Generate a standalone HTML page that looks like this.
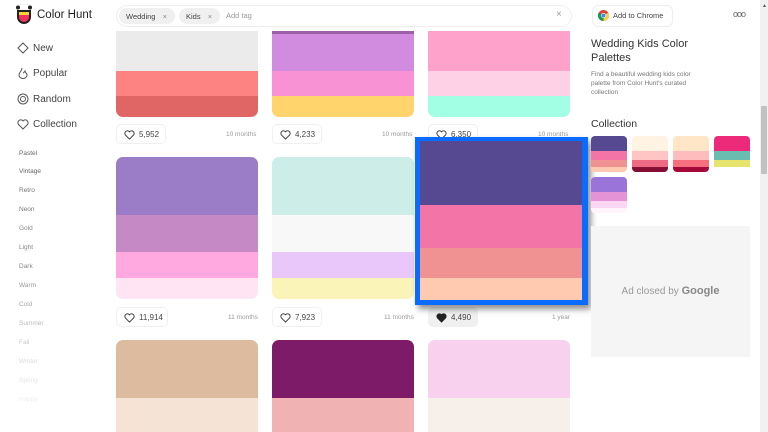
<!DOCTYPE html>
<html style="overflow:hidden;width:768px;height:432px"><head><style>
*{margin:0;padding:0;box-sizing:border-box}
body{width:768px;height:432px;overflow:hidden;background:#fff;font-family:"Liberation Sans",sans-serif;position:relative;color:#333}
.a{position:absolute}
.card{position:absolute;width:142px;border-radius:7px;overflow:hidden}
.card div{width:100%}
.like{position:absolute;height:20px;border:1px solid #f0f0f0;border-radius:5px;font-size:8px;color:#444;padding:5px 6px 0 22px}
.like svg{position:absolute;left:7px;top:5px}
.time{position:absolute;font-size:6.5px;color:#999}
.nav{position:absolute;left:33px;font-size:10px;color:#444}
.sub{position:absolute;left:19px;font-size:6.5px}
.th{position:absolute;width:36px;height:36px;border-radius:4px;overflow:hidden}
.th div{width:100%}
</style></head><body>
<div class="card" style="left:116px;top:22px;height:95px"><div style="height:49px;background:#ebebeb"></div><div style="height:25px;background:#fd8282"></div><div style="height:21px;background:#e06565"></div></div>
<div class="card" style="left:272px;top:22px;height:95px"><div style="height:12px;background:#9c5fa8"></div><div style="height:37px;background:#d28cdf"></div><div style="height:25px;background:#f892d5"></div><div style="height:21px;background:#ffd46c"></div></div>
<div class="card" style="left:428px;top:22px;height:95px"><div style="height:49px;background:#fea1cb"></div><div style="height:25px;background:#ffd1e6"></div><div style="height:21px;background:#a3ffe3"></div></div>
<div class="a" style="left:0;top:0;width:760px;height:31px;background:#fff"></div>
<svg class="a" style="left:15px;top:5px" width="18" height="19" viewBox="0 0 18 19"><circle cx="3" cy="2.5" r="2" fill="#222"/><circle cx="15" cy="2.5" r="2" fill="#222"/><path d="M2 5h14v7a7 7 0 0 1-14 0z" fill="#222"/><path d="M4 7h10v3H4z" fill="#fbd535"/><path d="M4 10h10v2a5 5 0 0 1-10 0z" fill="#f0325d"/></svg>
<div class="a" style="left:37px;top:9px;font-size:11.5px;color:#222">Color Hunt</div>
<div class="a" style="left:116px;top:5px;width:456px;height:22px;border:1px solid #eee;border-radius:11px"></div>
<div class="a" style="left:119px;top:8px;width:56px;height:16px;background:#f0f0f0;border-radius:8px;font-size:7.5px;color:#444;padding:4px 7px">Wedding <span style="color:#888;margin-left:5px">×</span></div>
<div class="a" style="left:179px;top:8px;width:41px;height:16px;background:#f0f0f0;border-radius:8px;font-size:7.5px;color:#444;padding:4px 7px">Kids <span style="color:#888;margin-left:5px">×</span></div>
<div class="a" style="left:226px;top:11px;font-size:7.5px;color:#999">Add tag</div>
<div class="a" style="left:556px;top:9px;font-size:10px;color:#999">×</div>
<div class="a" style="left:592px;top:5px;width:81px;height:22px;border:1px solid #eee;border-radius:6px"></div>
<svg class="a" style="left:598px;top:10px" width="11" height="11" viewBox="0 0 20 20"><circle cx="10" cy="10" r="10" fill="#db4437"/><path d="M10 10L1.3 15A10 10 0 0 0 10 20z" fill="#0f9d58"/><path d="M10 10L18.7 5A10 10 0 0 1 10 20z" fill="#ffcd40"/><path d="M10 10L1.3 15A10 10 0 0 1 1.3 5z" fill="#0f9d58"/><circle cx="10" cy="10" r="4.5" fill="#fff"/><circle cx="10" cy="10" r="3.5" fill="#4285f4"/></svg>
<div class="a" style="left:613px;top:11px;font-size:7.5px;color:#444">Add to Chrome</div>
<div class="a" style="left:733px;top:9px;font-size:9px;color:#666;letter-spacing:-1px">ooo</div>
<svg class="a" style="left:17px;top:42px" width="12" height="12" viewBox="0 0 12 12"><path d="M6 1L11 6 6 11 1 6z" fill="none" stroke="#555" stroke-width="1"/></svg>
<div class="nav" style="top:43px">New</div>
<svg class="a" style="left:17px;top:67px" width="12" height="12" viewBox="0 0 12 12"><path d="M5 1c0 3-3 4-3 7a4 3.5 0 0 0 8 0c0-2-2-2-2-4-1 1-1 2-2 2" fill="none" stroke="#555"/></svg>
<div class="nav" style="top:68px">Popular</div>
<svg class="a" style="left:17px;top:93px" width="12" height="12" viewBox="0 0 12 12"><circle cx="6" cy="6" r="5" fill="none" stroke="#555"/><circle cx="6" cy="6" r="2.5" fill="none" stroke="#555"/></svg>
<div class="nav" style="top:94px">Random</div>
<svg class="a" style="left:17px;top:119px" width="12" height="11" viewBox="0 0 12 11"><path d="M6 10L1.5 5.5a2.7 2.7 0 0 1 4.5-3.5 2.7 2.7 0 0 1 4.5 3.5z" fill="none" stroke="#555"/></svg>
<div class="nav" style="top:119px">Collection</div>
<div class="sub" style="top:150px;color:#666">Pastel</div>
<div class="sub" style="top:168px;color:#666">Vintage</div>
<div class="sub" style="top:187px;color:#777">Retro</div>
<div class="sub" style="top:206px;color:#777">Neon</div>
<div class="sub" style="top:225px;color:#888">Gold</div>
<div class="sub" style="top:244px;color:#888">Light</div>
<div class="sub" style="top:263px;color:#888">Dark</div>
<div class="sub" style="top:282px;color:#999">Warm</div>
<div class="sub" style="top:301px;color:#aaa">Cold</div>
<div class="sub" style="top:320px;color:#bbb">Summer</div>
<div class="sub" style="top:339px;color:#ccc">Fall</div>
<div class="sub" style="top:358px;color:#ddd">Winter</div>
<div class="sub" style="top:377px;color:#e5e5e5">Spring</div>
<div class="sub" style="top:396px;color:#eee">Happy</div>
<div class="like" style="left:116px;top:124px;width:50px"><svg width="11" height="10" viewBox="0 0 12 11"><path d="M6 10L1.5 5.5a2.7 2.7 0 0 1 4.5-3.5 2.7 2.7 0 0 1 4.5 3.5z" fill="none" stroke="#333"/></svg>5,952</div>
<div class="time" style="left:226px;top:131px">10 months</div>
<div class="like" style="left:272px;top:124px;width:50px"><svg width="11" height="10" viewBox="0 0 12 11"><path d="M6 10L1.5 5.5a2.7 2.7 0 0 1 4.5-3.5 2.7 2.7 0 0 1 4.5 3.5z" fill="none" stroke="#333"/></svg>4,233</div>
<div class="time" style="left:382px;top:131px">10 months</div>
<div class="like" style="left:428px;top:124px;width:50px"><svg width="11" height="10" viewBox="0 0 12 11"><path d="M6 10L1.5 5.5a2.7 2.7 0 0 1 4.5-3.5 2.7 2.7 0 0 1 4.5 3.5z" fill="none" stroke="#333"/></svg>6,350</div>
<div class="time" style="left:538px;top:131px">10 months</div>
<div class="card" style="left:116px;top:157px;height:142px"><div style="height:58px;background:#9a7dc6"></div><div style="height:37px;background:#c58ac6"></div><div style="height:26px;background:#ffa9e0"></div><div style="height:21px;background:#ffe4f4"></div></div>
<div class="card" style="left:272px;top:157px;height:142px"><div style="height:58px;background:#cdeee8"></div><div style="height:37px;background:#f8f8f8"></div><div style="height:26px;background:#e9c7fb"></div><div style="height:21px;background:#faf4b9"></div></div>
<div class="like" style="left:116px;top:307px;width:52px"><svg width="11" height="10" viewBox="0 0 12 11"><path d="M6 10L1.5 5.5a2.7 2.7 0 0 1 4.5-3.5 2.7 2.7 0 0 1 4.5 3.5z" fill="none" stroke="#333"/></svg>11,914</div>
<div class="time" style="left:228px;top:314px">11 months</div>
<div class="like" style="left:272px;top:307px;width:50px"><svg width="11" height="10" viewBox="0 0 12 11"><path d="M6 10L1.5 5.5a2.7 2.7 0 0 1 4.5-3.5 2.7 2.7 0 0 1 4.5 3.5z" fill="none" stroke="#333"/></svg>7,923</div>
<div class="time" style="left:384px;top:314px">11 months</div>
<div class="like" style="left:428px;top:307px;width:50px;background:#f0f0f0"><svg width="11" height="10" viewBox="0 0 12 11"><path d="M6 10L1.5 5.5a2.7 2.7 0 0 1 4.5-3.5 2.7 2.7 0 0 1 4.5 3.5z" fill="#222" stroke="#222"/></svg>4,490</div>
<div class="time" style="left:552px;top:314px">1 year</div>
<div class="card" style="left:116px;top:340px;height:92px;border-radius:7px 7px 0 0"><div style="height:58px;background:#ddbb9f"></div><div style="height:34px;background:#f5e3d6"></div></div>
<div class="card" style="left:272px;top:340px;height:92px;border-radius:7px 7px 0 0"><div style="height:58px;background:#7e1b68"></div><div style="height:34px;background:#f0b2b2"></div></div>
<div class="card" style="left:428px;top:340px;height:92px;border-radius:7px 7px 0 0"><div style="height:58px;background:#f7d1ee"></div><div style="height:34px;background:#f7efea"></div></div>
<div class="a" style="left:415px;top:137px;width:173px;height:168px;background:#0a6cff;box-shadow:3px 4px 6px rgba(0,0,0,.45)"></div>
<div class="a" style="left:420px;top:141px;width:162px;height:159px">
<div style="height:64px;background:#564991"></div><div style="height:43px;background:#f374a7"></div><div style="height:30px;background:#f19292"></div><div style="height:22px;background:#ffcab0"></div></div>
<div class="a" style="left:591px;top:37px;font-size:11px;line-height:14px;color:#333;width:120px">Wedding Kids Color Palettes</div>
<div class="a" style="left:591px;top:70px;font-size:6.5px;line-height:9px;color:#777;width:115px">Find a beautiful wedding kids color palette from Color Hunt's curated collection</div>
<div class="a" style="left:591px;top:118px;font-size:10.5px;color:#333">Collection</div>
<div class="th" style="left:591px;top:136px"><div style="height:15px;background:#564991"></div><div style="height:9px;background:#f374a7"></div><div style="height:7px;background:#f19292"></div><div style="height:5px;background:#ffcab0"></div></div>
<div class="th" style="left:632px;top:136px"><div style="height:15px;background:#fff3e4"></div><div style="height:9px;background:#ffc4c4"></div><div style="height:7px;background:#ee6983"></div><div style="height:5px;background:#850e35"></div></div>
<div class="th" style="left:673px;top:136px"><div style="height:15px;background:#ffe6c7"></div><div style="height:9px;background:#ffbcbc"></div><div style="height:7px;background:#f56f7f"></div><div style="height:5px;background:#a5093a"></div></div>
<div class="th" style="left:714px;top:136px"><div style="height:15px;background:#ed2a7a"></div><div style="height:9px;background:#6bbcb0"></div><div style="height:7px;background:#e6e46c"></div><div style="height:5px;background:#fff"></div></div>
<div class="th" style="left:591px;top:177px"><div style="height:15px;background:#9b74d9"></div><div style="height:9px;background:#e493d6"></div><div style="height:7px;background:#fcd6f2"></div><div style="height:5px;background:#fff4fc"></div></div>
<div class="a" style="left:591px;top:226px;width:159px;height:131px;background:#f5f5f5"></div>
<div class="a" style="left:591px;top:285px;width:159px;text-align:center;font-size:10px;color:#999">Ad closed by <b style="color:#888;font-size:11px">Google</b></div>
<div class="a" style="left:760px;top:0;width:8px;height:432px;background:#f1f1f1"></div>
<div class="a" style="left:761px;top:106px;width:6px;height:68px;background:#c1c1c1"></div>
<div class="a" style="left:762px;top:3px;font-size:5px;color:#555">▲</div>
</body></html>
